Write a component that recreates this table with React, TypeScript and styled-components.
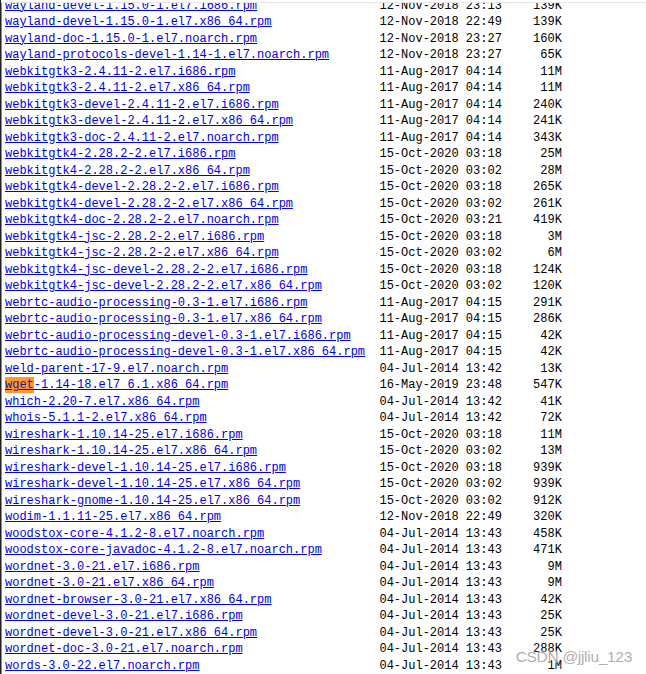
import React from "react";
import styled, { createGlobalStyle } from "styled-components";

const GlobalStyle = createGlobalStyle`
  html, body { margin: 0; padding: 0; background: #ffffff; }
  body { overflow: hidden; }
`;

type Entry = { name: string; date: string; size: string; hit?: string };

const entries: Entry[] = [
  { name: "wayland-devel-1.15.0-1.el7.i686.rpm", date: "12-Nov-2018 23:13", size: "139K" },
  { name: "wayland-devel-1.15.0-1.el7.x86_64.rpm", date: "12-Nov-2018 22:49", size: "139K" },
  { name: "wayland-doc-1.15.0-1.el7.noarch.rpm", date: "12-Nov-2018 23:27", size: "160K" },
  { name: "wayland-protocols-devel-1.14-1.el7.noarch.rpm", date: "12-Nov-2018 23:27", size: "65K" },
  { name: "webkitgtk3-2.4.11-2.el7.i686.rpm", date: "11-Aug-2017 04:14", size: "11M" },
  { name: "webkitgtk3-2.4.11-2.el7.x86_64.rpm", date: "11-Aug-2017 04:14", size: "11M" },
  { name: "webkitgtk3-devel-2.4.11-2.el7.i686.rpm", date: "11-Aug-2017 04:14", size: "240K" },
  { name: "webkitgtk3-devel-2.4.11-2.el7.x86_64.rpm", date: "11-Aug-2017 04:14", size: "241K" },
  { name: "webkitgtk3-doc-2.4.11-2.el7.noarch.rpm", date: "11-Aug-2017 04:14", size: "343K" },
  { name: "webkitgtk4-2.28.2-2.el7.i686.rpm", date: "15-Oct-2020 03:18", size: "25M" },
  { name: "webkitgtk4-2.28.2-2.el7.x86_64.rpm", date: "15-Oct-2020 03:02", size: "28M" },
  { name: "webkitgtk4-devel-2.28.2-2.el7.i686.rpm", date: "15-Oct-2020 03:18", size: "265K" },
  { name: "webkitgtk4-devel-2.28.2-2.el7.x86_64.rpm", date: "15-Oct-2020 03:02", size: "261K" },
  { name: "webkitgtk4-doc-2.28.2-2.el7.noarch.rpm", date: "15-Oct-2020 03:21", size: "419K" },
  { name: "webkitgtk4-jsc-2.28.2-2.el7.i686.rpm", date: "15-Oct-2020 03:18", size: "3M" },
  { name: "webkitgtk4-jsc-2.28.2-2.el7.x86_64.rpm", date: "15-Oct-2020 03:02", size: "6M" },
  { name: "webkitgtk4-jsc-devel-2.28.2-2.el7.i686.rpm", date: "15-Oct-2020 03:18", size: "124K" },
  { name: "webkitgtk4-jsc-devel-2.28.2-2.el7.x86_64.rpm", date: "15-Oct-2020 03:02", size: "120K" },
  { name: "webrtc-audio-processing-0.3-1.el7.i686.rpm", date: "11-Aug-2017 04:15", size: "291K" },
  { name: "webrtc-audio-processing-0.3-1.el7.x86_64.rpm", date: "11-Aug-2017 04:15", size: "286K" },
  { name: "webrtc-audio-processing-devel-0.3-1.el7.i686.rpm", date: "11-Aug-2017 04:15", size: "42K" },
  { name: "webrtc-audio-processing-devel-0.3-1.el7.x86_64.rpm", date: "11-Aug-2017 04:15", size: "42K" },
  { name: "weld-parent-17-9.el7.noarch.rpm", date: "04-Jul-2014 13:42", size: "13K" },
  { name: "-1.14-18.el7_6.1.x86_64.rpm", hit: "wget", date: "16-May-2019 23:48", size: "547K" },
  { name: "which-2.20-7.el7.x86_64.rpm", date: "04-Jul-2014 13:42", size: "41K" },
  { name: "whois-5.1.1-2.el7.x86_64.rpm", date: "04-Jul-2014 13:42", size: "72K" },
  { name: "wireshark-1.10.14-25.el7.i686.rpm", date: "15-Oct-2020 03:18", size: "11M" },
  { name: "wireshark-1.10.14-25.el7.x86_64.rpm", date: "15-Oct-2020 03:02", size: "13M" },
  { name: "wireshark-devel-1.10.14-25.el7.i686.rpm", date: "15-Oct-2020 03:18", size: "939K" },
  { name: "wireshark-devel-1.10.14-25.el7.x86_64.rpm", date: "15-Oct-2020 03:02", size: "939K" },
  { name: "wireshark-gnome-1.10.14-25.el7.x86_64.rpm", date: "15-Oct-2020 03:02", size: "912K" },
  { name: "wodim-1.1.11-25.el7.x86_64.rpm", date: "12-Nov-2018 22:49", size: "320K" },
  { name: "woodstox-core-4.1.2-8.el7.noarch.rpm", date: "04-Jul-2014 13:43", size: "458K" },
  { name: "woodstox-core-javadoc-4.1.2-8.el7.noarch.rpm", date: "04-Jul-2014 13:43", size: "471K" },
  { name: "wordnet-3.0-21.el7.i686.rpm", date: "04-Jul-2014 13:43", size: "9M" },
  { name: "wordnet-3.0-21.el7.x86_64.rpm", date: "04-Jul-2014 13:43", size: "9M" },
  { name: "wordnet-browser-3.0-21.el7.x86_64.rpm", date: "04-Jul-2014 13:43", size: "42K" },
  { name: "wordnet-devel-3.0-21.el7.i686.rpm", date: "04-Jul-2014 13:43", size: "25K" },
  { name: "wordnet-devel-3.0-21.el7.x86_64.rpm", date: "04-Jul-2014 13:43", size: "25K" },
  { name: "wordnet-doc-3.0-21.el7.noarch.rpm", date: "04-Jul-2014 13:43", size: "288K" },
  { name: "words-3.0-22.el7.noarch.rpm", date: "04-Jul-2014 13:43", size: "1M" },
];

const Page = styled.div`
  position: relative;
  width: 646px;
  height: 674px;
  overflow: hidden;
  box-sizing: border-box;
  border-left: 1px solid #222222;
  box-shadow: inset 1px 0 0 #8a8a8a;
  background: #ffffff;
`;

const TopEdge = styled.div`
  position: absolute;
  left: 0;
  right: 0;
  top: 0;
  height: 2px;
  background: #ffffff;
  border-bottom: 1px solid #e6e6e6;
`;

const Listing = styled.div`
  display: flex;
  flex-direction: column;
  margin-top: -2.5px;
  padding-left: 4px;
  font-family: "Liberation Mono", "Courier New", monospace;
  font-size: 12px;
  line-height: 16.5px;
  color: #000000;
`;

const Row = styled.div`
  display: grid;
  grid-template-columns: 52ch 17ch 60px;
  white-space: pre;
`;

const FileLink = styled.a`
  color: #0000ee;
  text-decoration: underline;
`;

const Hit = styled.span`
  background: #ff9632;
  color: #1a1a8c;
  padding: 1px 0 1px;
`;

const DateCell = styled.span``;

const SizeCell = styled.span`
  text-align: right;
`;

const Watermark = styled.div`
  position: absolute;
  right: 14px;
  bottom: 9px;
  font-family: "Liberation Sans", Arial, sans-serif;
  font-size: 15.5px;
  line-height: 17px;
  color: rgba(160, 160, 160, 0.85);
  text-shadow: 0 0 2px #ffffff, 0 0 2px #ffffff;
  letter-spacing: -0.3px;
`;

export default function App() {
  return (
    <>
      <GlobalStyle />
      <Page>
        <Listing>
          {entries.map((e, i) => (
            <Row key={i}>
              <span>
                <FileLink href="#">
                  {e.hit ? <Hit>{e.hit}</Hit> : null}
                  {e.name}
                </FileLink>
              </span>
              <DateCell>{e.date}</DateCell>
              <SizeCell>{e.size}</SizeCell>
            </Row>
          ))}
        </Listing>
        <TopEdge />
        <Watermark>CSDN @jjliu_123</Watermark>
      </Page>
    </>
  );
}
